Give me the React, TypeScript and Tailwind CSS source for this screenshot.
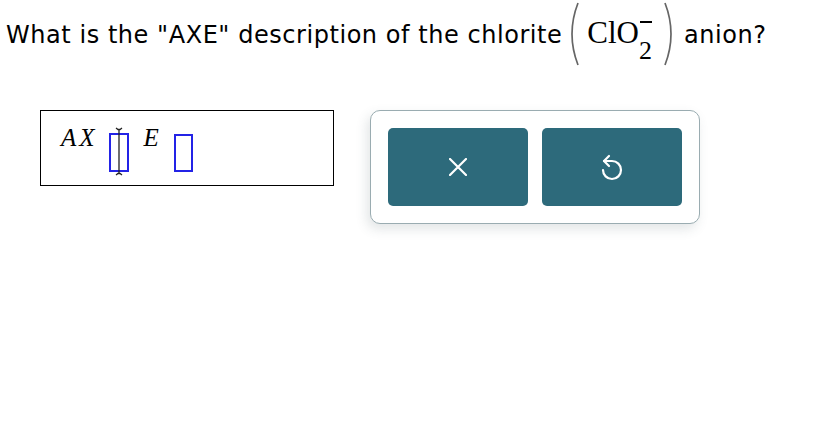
import React from 'react';

const Paren: React.FC<{ side: 'left' | 'right' }> = ({ side }) => (
  <svg width="14" height="64" viewBox="0 0 14 64" className="shrink-0">
    {side === 'left' ? (
      <path d="M12 1 Q0 32 12 63" fill="none" stroke="#666" strokeWidth="1.7" />
    ) : (
      <path d="M2 1 Q14 32 2 63" fill="none" stroke="#666" strokeWidth="1.7" />
    )}
  </svg>
);

const XIcon = () => (
  <svg width="18" height="18" viewBox="0 0 18 18">
    <path d="M1 1 L17 17 M17 1 L1 17" stroke="white" strokeWidth="2.2" strokeLinecap="round" />
  </svg>
);

const ResetIcon = () => (
  <svg width="32" height="32" viewBox="0 0 32 32">
    <path d="M8 10 H16 A9 9 0 1 1 7 19" fill="none" stroke="white" strokeWidth="2.2" strokeLinecap="round" />
    <path d="M13 5 L8 10 L13 15" fill="none" stroke="white" strokeWidth="2.2" strokeLinecap="round" strokeLinejoin="round" />
  </svg>
);

const serif = { fontFamily: '"Liberation Serif", "Times New Roman", serif' };

export default function App() {
  return (
    <div className="w-[816px] h-[423px] bg-white" style={{ fontFamily: '"DejaVu Sans", Verdana, sans-serif' }}>
      {/* Question */}
      <div className="flex items-center h-[68px] pl-[6px] text-[24px] text-black tracking-[0.55px]">
        <span className="mt-[2px]">What is the "AXE" description of the chlorite</span>
        <span className="flex items-center ml-[4px] mr-[7px] tracking-normal">
          <Paren side="left" />
          <span className="relative flex items-start ml-[7px] mr-[11px] h-[44px] text-[31px] leading-none" style={serif}>
            <span className="mt-[5px]">ClO</span>
            <span className="relative w-[13px]">
              <span className="absolute left-[1px] top-[9px] w-[12px] h-[1.5px] bg-black" />
              <span className="absolute left-0 top-[26px] text-[26px] leading-none" style={serif}>2</span>
            </span>
          </span>
          <Paren side="right" />
        </span>
        <span className="mt-[2px]">anion?</span>
      </div>

      <div className="flex items-start mt-[42px] pl-[40px] gap-[36px]">
        {/* Answer input */}
        <div className="w-[294px] h-[76px] border border-black flex items-start pl-[20px] pt-[14px]" style={serif}>
          <span className="italic text-[25px] leading-none tracking-[3px]">AX</span>
          <span className="relative ml-[11px] mt-[8px] w-[20px] h-[39px] border-2 border-[#2323e6]">
            <svg className="absolute -left-[2px] -top-[8px]" width="20" height="50" viewBox="0 0 20 50">
              <path d="M10 2 V47 M7 1 L9 2.5 L11 2.5 L13 1 M7 48 L9 46.5 L11 46.5 L13 48" fill="none" stroke="#222" strokeWidth="1.3" />
            </svg>
          </span>
          <span className="italic text-[25px] leading-none ml-[15px]">E</span>
          <span className="ml-[15px] mt-[9px] w-[19px] h-[38px] border-2 border-[#2323e6]" />
        </div>

        {/* Action panel */}
        <div className="w-[330px] h-[114px] border border-[#9aacb1] rounded-[10px] bg-white shadow-[-3px_5px_12px_rgba(60,80,90,0.15)] flex gap-[14px] p-[17px]">
          <button className="flex-1 bg-[#2d6a7b] rounded-[5px] flex items-center justify-center">
            <XIcon />
          </button>
          <button className="flex-1 bg-[#2d6a7b] rounded-[5px] flex items-center justify-center">
            <ResetIcon />
          </button>
        </div>
      </div>
    </div>
  );
}
